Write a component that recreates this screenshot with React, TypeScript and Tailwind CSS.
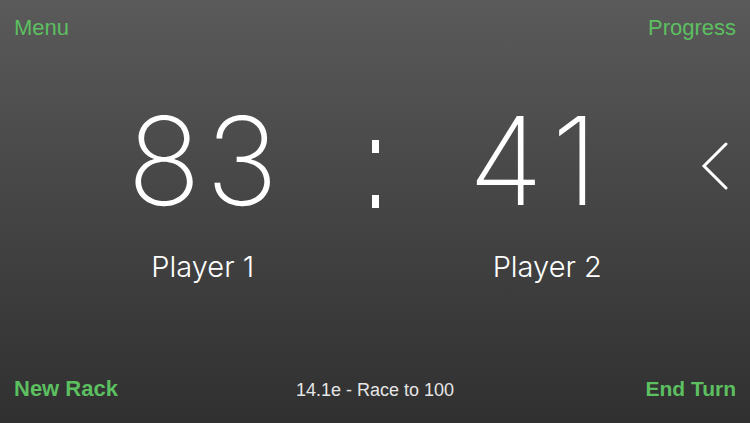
import React from "react";

const sans = { fontFamily: '"Liberation Sans", Arial, sans-serif' };

function Score({ value, name, numberClass }: { value: string; name: string; numberClass: string }) {
  return (
    <div className="flex flex-col items-center">
      <span
        className={`font-['Inter',sans-serif] text-[122px] font-extralight leading-[128px] tracking-[5px] ${numberClass}`}
      >
        {value}
      </span>
      <span className="mt-[26px] font-['Inter',sans-serif] text-[29px] font-light leading-[32px]">
        {name}
      </span>
    </div>
  );
}

export default function App() {
  return (
    <div
      className="relative flex h-[423px] w-[750px] flex-col overflow-hidden bg-gradient-to-b from-[#5a5a5a] to-[#303030] text-white"
      style={sans}
    >
      {/* top bar */}
      <div className="flex items-start justify-between px-[14px] pt-[16px] text-[22px] leading-[24px] text-[#5cbf60]">
        <span>Menu</span>
        <span>Progress</span>
      </div>

      {/* scoreboard */}
      <div className="mt-[57px] grid grid-cols-[1fr_auto_1fr] px-[34px]">
        <Score value="83" name="Player 1" numberClass="pl-[5px]" />
        <div className="flex h-[128px] flex-col items-center pt-[43px]" aria-label=":">
          <div className="h-[13px] w-[7px] bg-white" />
          <div className="mt-[42px] h-[13px] w-[7px] bg-white" />
        </div>
        <Score value="41" name="Player 2" numberClass="pr-[18px] tracking-[10px]" />
      </div>

      {/* previous-player chevron */}
      <svg
        className="absolute left-[701px] top-[142px]"
        width="28"
        height="48"
        viewBox="0 0 28 48"
        fill="none"
        stroke="white"
        strokeWidth="3"
        strokeLinecap="round"
      >
        <path d="M25 2 L3 24 L25 46" />
      </svg>

      {/* bottom bar */}
      <div className="mt-auto grid grid-cols-[1fr_auto_1fr] items-end px-[14px] pb-[22px]">
        <span className="text-[22px] font-bold leading-[24px] text-[#5cbf60]">New Rack</span>
        <span className="text-[18px] leading-[22px] text-[#e6e6e6]">14.1e - Race to 100</span>
        <span className="justify-self-end text-[21px] font-bold leading-[24px] text-[#5cbf60]">
          End Turn
        </span>
      </div>
    </div>
  );
}
